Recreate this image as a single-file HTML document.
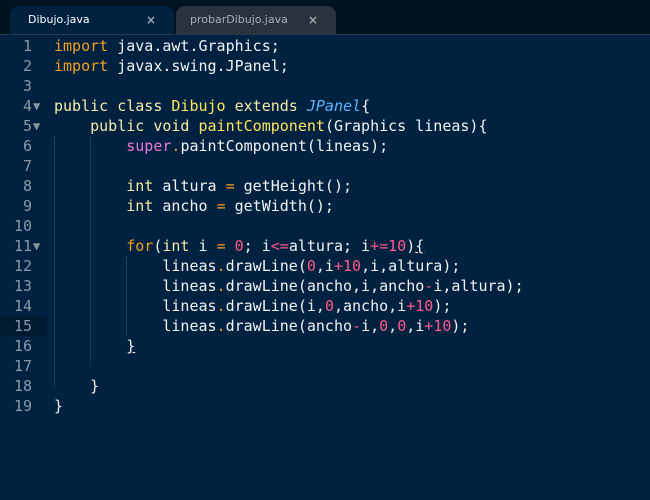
<!DOCTYPE html>
<html><head><style>
body{margin:0;width:650px;height:500px;background:#002240;overflow:hidden;font-family:"DejaVu Sans Mono","Liberation Mono",monospace;}
#tabs{position:absolute;left:0;top:0;width:650px;height:34px;background:#001321;border-bottom:1px solid #2a3a4c;}
.tab{position:absolute;top:6px;height:28px;border-radius:9px 9px 0 0;font-family:"DejaVu Sans","Liberation Sans",sans-serif;font-size:11px;line-height:28px;}
#t1{left:10px;width:164px;background:#002240;color:#fff;}
#t2{left:176px;width:160px;background:#2a333d;color:#aab;}
.tab span{position:absolute;left:18px;}
.tab b{position:absolute;right:18px;font-weight:bold;color:#9aa;font-size:12px;}
#t2 span{left:14px}
.ln{position:absolute;left:0;width:32px;text-align:right;color:#8a98a6;font-size:15px;height:20px;line-height:20px;}
.fold{position:absolute;left:33px;color:#8a96a0;font-size:12px;line-height:20px;}
.code{position:absolute;left:54px;font-size:15px;line-height:20px;color:#f2f2f2;white-space:pre;}
.k{color:#f0a020}.t{color:#f5eaa8}.y{color:#ffe45e}.c{color:#5ab4ff;font-style:italic}.n{color:#ff5a8a}.s{color:#e877d8}.o{color:#f0a020}
.g{position:absolute;border-left:1px dotted #34506a;width:0}
</style></head><body>
<div id="tabs"><div class="tab" id="t1"><span>Dibujo.java</span><b>×</b></div><div class="tab" id="t2"><span>probarDibujo.java</span><b>×</b></div></div>
<div style="position:absolute;left:0;top:316px;width:47px;height:20px;background:#001a32"></div>
<div class="g" style="left:54px;top:136px;height:250px"></div>
<div class="g" style="left:90px;top:136px;height:230px"></div>
<div class="g" style="left:126px;top:256px;height:80px"></div>
<div class="ln" style="top:36px">1</div><div class="ln" style="top:56px">2</div><div class="ln" style="top:76px">3</div><div class="ln" style="top:96px">4</div><div class="ln" style="top:116px">5</div><div class="ln" style="top:136px">6</div><div class="ln" style="top:156px">7</div><div class="ln" style="top:176px">8</div><div class="ln" style="top:196px">9</div><div class="ln" style="top:216px">10</div><div class="ln" style="top:236px">11</div><div class="ln" style="top:256px">12</div><div class="ln" style="top:276px">13</div><div class="ln" style="top:296px">14</div><div class="ln" style="top:316px">15</div><div class="ln" style="top:336px">16</div><div class="ln" style="top:356px">17</div><div class="ln" style="top:376px">18</div><div class="ln" style="top:396px">19</div>
<div class="fold" style="top:96px">▼</div><div class="fold" style="top:116px">▼</div><div class="fold" style="top:236px">▼</div>
<div class="code" style="top:36px"><span class="k">import</span> java.awt.Graphics;
<span class="k">import</span> javax.swing.JPanel;

<span class="t">public class</span> <span class="y">Dibujo</span> <span class="t">extends</span> <span class="c">JPanel</span>{
    <span class="t">public void</span> <span class="y">paintComponent</span>(Graphics lineas){
        <span class="s">super</span><span class="o">.</span>paintComponent(lineas);

        <span class="t">int</span> altura <span class="o">=</span> getHeight();
        <span class="t">int</span> ancho <span class="o">=</span> getWidth();

        <span class="k">for</span>(<span class="t">int</span> i <span class="o">=</span> <span class="n">0</span>; i<span class="n">&lt;=</span>altura; i<span class="n">+=</span><span class="n">10</span>)<u>{</u>
            lineas<span class="o">.</span>drawLine(<span class="n">0</span>,i<span class="n">+</span><span class="n">10</span>,i,altura);
            lineas<span class="o">.</span>drawLine(ancho,i,ancho<span class="n">-</span>i,altura);
            lineas<span class="o">.</span>drawLine(i,<span class="n">0</span>,ancho,i<span class="n">+</span><span class="n">10</span>);
            lineas<span class="o">.</span>drawLine(ancho<span class="n">-</span>i,<span class="n">0</span>,<span class="n">0</span>,i<span class="n">+</span><span class="n">10</span>);
        <u>}</u>

    }
}</div>
</body></html>
